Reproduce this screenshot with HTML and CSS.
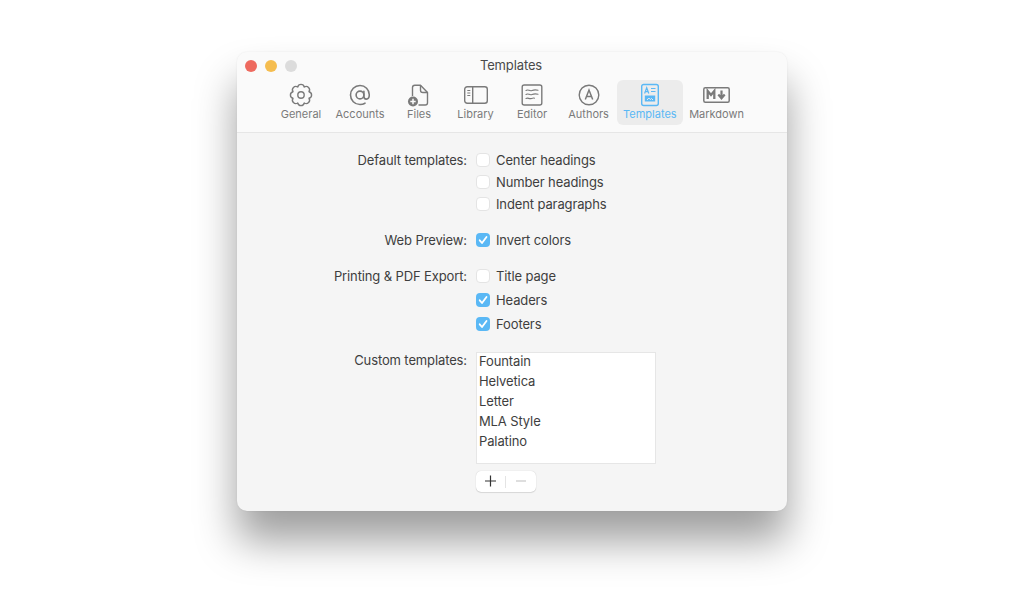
FILE: index.html
```html
<!DOCTYPE html>
<html lang="en">
<head>
    <meta charset="UTF-8">
    <meta name="viewport" content="width=device-width, initial-scale=1.0">
    <title>Templates</title>
    <link rel="stylesheet" href="styles.css">
</head>
<body>
    <div class="window">
        <div class="toolbar">
            <div class="titlebar">
                <div class="lights">
                    <span class="light red"></span>
                    <span class="light yellow"></span>
                    <span class="light grey"></span>
                </div>
                <div class="title">Templates</div>
            </div>
            <div class="tabs">
                <div class="tab">
                    <svg class="icon" width="24" height="24" viewBox="0 0 24 24" fill="none" stroke="currentColor" stroke-width="1.4" stroke-linejoin="round">
                        <path d="M20 8.700A3.400 3.400 0 0 1 20 15.300A3.400 3.400 0 0 1 15.300 20A3.400 3.400 0 0 1 8.700 20A3.400 3.400 0 0 1 4 15.300A3.400 3.400 0 0 1 4 8.700A3.400 3.400 0 0 1 8.700 4A3.400 3.400 0 0 1 15.300 4A3.400 3.400 0 0 1 20 8.700Z"/>
                        <circle cx="12" cy="12" r="3.2"/>
                    </svg>
                    <span>General</span>
                </div>
                <div class="tab">
                    <svg class="icon" width="24" height="24" viewBox="0 0 24 24" fill="none" stroke="currentColor" stroke-width="1.6" stroke-linecap="round">
                        <circle cx="12" cy="12" r="3.9"/>
                        <path d="M15.900 8.200v5.300c0 1.600 1 2.600 2.400 2.600 2 0 3-1.900 3-4.300C21.300 6.600 17.200 2.500 12 2.500 6.700 2.500 2.500 6.700 2.500 12s4.200 9.500 9.500 9.500c1.900 0 3.500-.4 5-1.300"/>
                    </svg>
                    <span>Accounts</span>
                </div>
                <div class="tab">
                    <svg class="icon" width="24" height="24" viewBox="0 0 24 24" fill="none" stroke="currentColor" stroke-width="1.4" stroke-linejoin="round">
                        <path d="M5.500 13V4.500c0-1.500.8-2.300 2.300-2.300h5.700l7 7.300v10.200c0 1.500-.8 2.300-2.300 2.300h-6.700"/>
                        <path d="M13.500 2.200v5c0 1.500.8 2.300 2.300 2.300h4.700"/>
                        <circle cx="6" cy="18.500" r="5" fill="currentColor" stroke="none"/>
                        <path d="M6 15.800v5.400M3.300 18.500h5.400" stroke="#fafafa" stroke-width="1.500"/>
                    </svg>
                    <span>Files</span>
                </div>
                <div class="tab">
                    <svg class="icon" width="24" height="24" viewBox="0 0 24 24" fill="none" stroke="currentColor" stroke-width="1.4">
                        <rect x=".7" y="3.700" width="22.600" height="16.600" rx="2.500"/>
                        <path d="M8.700 3.700v16.600"/>
                        <path d="M3.300 7.500h3M3.300 10h3M3.300 12.500h3" stroke-width="1.200"/>
                    </svg>
                    <span>Library</span>
                </div>
                <div class="tab">
                    <svg class="icon" width="24" height="24" viewBox="0 0 24 24" fill="none" stroke="currentColor" stroke-width="1.4" stroke-linecap="round">
                        <rect x="2.200" y="2" width="19.600" height="20" rx="2"/>
                        <path d="M6 7.500c2-1.500 3.500 1 6 0s3.500-1 6-.2M6 11.500c2-1.500 3.500 1 6 0s3.500-1 6-.2M6 15.500c2-1.200 3 .8 5.500 0s2-.5 3-.3" stroke-width="1.100"/>
                    </svg>
                    <span>Editor</span>
                </div>
                <div class="tab">
                    <svg class="icon" width="24" height="24" viewBox="0 0 24 24" fill="none" stroke="currentColor" stroke-width="1.4">
                        <circle cx="12" cy="12" r="9.800"/>
                        <path d="M8.300 16.500 12 7l3.700 9.500M9.300 13.500h5.400" stroke-width="1.500"/>
                    </svg>
                    <span>Authors</span>
                </div>
                <div class="tab active">
                    <svg class="icon" width="24" height="24" viewBox="0 0 24 24" fill="none" stroke="currentColor" stroke-width="1.4">
                        <rect x="3.700" y="1.500" width="16.600" height="21" rx="2"/>
                        <path d="M6.600 10.500 8.700 4.800l2.100 5.700M7.400 8.700h2.600M13 5.500h4.500M13 8.500h4.500" stroke-width="1.200"/>
                        <path d="M6.800 12.500h10.400v6H6.800z" fill="currentColor" stroke="none"/>
                        <path d="m9 17 1.800-2 1.500 1.500 1.200-1 1.500 1.500" stroke="#ececec" stroke-width="1"/>
                    </svg>
                    <span>Templates</span>
                </div>
                <div class="tab">
                    <svg class="icon" width="27" height="24" viewBox="0 0 27 24" fill="none" stroke="currentColor" stroke-width="1.5">
                        <rect x=".8" y="4.800" width="25.400" height="14.400" rx="1.500"/>
                        <path d="M4.700 16v-8l3.300 4 3.300-4v8" stroke-width="2.300"/>
                        <path d="M18.500 7.500v7M15.300 11.500l3.200 3.700 3.200-3.700" stroke-width="2.200"/>
                    </svg>
                    <span>Markdown</span>
                </div>
            </div>
        </div>

        <form class="prefs">
            <div class="row row-default">
                <div class="row-label">Default templates:</div>
                <div class="row-body">
                    <label class="check"><span class="box"></span>Center headings</label>
                    <label class="check"><span class="box"></span>Number headings</label>
                    <label class="check"><span class="box"></span>Indent paragraphs</label>
                </div>
            </div>
            <div class="row row-preview">
                <div class="row-label">Web Preview:</div>
                <div class="row-body">
                    <label class="check"><span class="box on"><svg width="14" height="14" viewBox="0 0 14 14" fill="none" stroke="#fff" stroke-width="1.800" stroke-linecap="round" stroke-linejoin="round"><path d="M3.700 7.300 6 10l4.500-6"/></svg></span>Invert colors</label>
                </div>
            </div>
            <div class="row row-print">
                <div class="row-label">Printing &amp; PDF Export:</div>
                <div class="row-body">
                    <label class="check"><span class="box"></span>Title page</label>
                    <label class="check"><span class="box on"><svg width="14" height="14" viewBox="0 0 14 14" fill="none" stroke="#fff" stroke-width="1.800" stroke-linecap="round" stroke-linejoin="round"><path d="M3.700 7.300 6 10l4.500-6"/></svg></span>Headers</label>
                    <label class="check"><span class="box on"><svg width="14" height="14" viewBox="0 0 14 14" fill="none" stroke="#fff" stroke-width="1.800" stroke-linecap="round" stroke-linejoin="round"><path d="M3.700 7.300 6 10l4.500-6"/></svg></span>Footers</label>
                </div>
            </div>
            <div class="row row-custom">
                <div class="row-label">Custom templates:</div>
                <div class="row-body">
                    <ul class="list">
                        <li>Fountain</li>
                        <li>Helvetica</li>
                        <li>Letter</li>
                        <li>MLA Style</li>
                        <li>Palatino</li>
                    </ul>
                    <div class="stepper">
                        <svg class="step" width="29" height="21" viewBox="0 0 29 21" stroke="#333" stroke-width="1.2"><path d="M9 10h11M14.500 4.500v11"/></svg>
                        <span class="divider"></span>
                        <svg class="step" width="29" height="21" viewBox="0 0 29 21" stroke="#c8c8c8" stroke-width="1.2"><path d="M10 10h10"/></svg>
                    </div>
                </div>
            </div>
        </form>
    </div>
</body>
</html>
```

FILE: styles.css
```css
html, body {
    height: 100%;
}

body {
    font-family: Inter, "Liberation Sans", sans-serif;
    font-size: 13px;
    letter-spacing: -0.12px;
    margin: 0;
    padding-top: 52px;
    box-sizing: border-box;
    background-color: #fff;
    color: #3e3e3e;
    overflow: hidden;
}

.window {
    width: 550px;
    height: 459px;
    margin-left: 237px;
    border-radius: 10px;
    background: #f5f5f5;
    box-shadow: 0 30px 42px rgba(0, 0, 0, 0.38), 0 0 2px rgba(0, 0, 0, 0.08);
    overflow: hidden;
}

.toolbar {
    height: 81px;
    box-sizing: border-box;
    background: #fafafa;
    border-bottom: 1px solid #e6e6e6;
}

.titlebar {
    display: flex;
    align-items: center;
    height: 28px;
    padding-left: 8px;
}

.lights {
    display: flex;
    gap: 8px;
    width: 0;
}

.light {
    flex: none;
    width: 12px;
    height: 12px;
    border-radius: 50%;
}

.red { background: #ee6a5f; }
.yellow { background: #f5bd4f; }
.grey { background: #dcdcdc; }

.title {
    flex: 1;
    text-align: center;
    color: #4a4a4a;
    padding-right: 10px;
    padding-bottom: 2px;
}

.tabs {
    display: flex;
    justify-content: center;
    gap: 0.5px;
    padding-right: 1px;
}

.tab {
    display: flex;
    flex-direction: column;
    align-items: center;
    min-width: 44px;
    height: 45px;
    padding: 0 6px;
    border-radius: 6px;
    font-size: 11px;
    letter-spacing: 0;
    color: #7a7a7a;
}

.tab .icon {
    margin-top: 3px;
}

.tab.active {
    background: #ececec;
    color: #5ab8f5;
}

.prefs {
    padding-top: 16px;
}

.row {
    display: flex;
    gap: 9px;
}

.row-label {
    width: 230px;
    text-align: right;
    line-height: 22px;
}

.row-preview {
    margin-top: 14px;
}

.row-print {
    margin-top: 14px;
}

.row-custom {
    margin-top: 17px;
}

.row-custom .row-label {
    line-height: 16px;
}

.check {
    display: flex;
    align-items: center;
    gap: 6px;
    height: 22px;
}

.row-print .check + .check {
    margin-top: 2px;
}

.box {
    flex: none;
    width: 14px;
    height: 14px;
    box-sizing: border-box;
    border-radius: 4px;
    background: #fff;
    border: 1px solid #e4e4e4;
}

.box svg {
    display: block;
}

.box.on {
    background: #5ab8f5;
    border: none;
}

.list {
    list-style: none;
    margin: 0 0 7px;
    padding: 0;
    width: 180px;
    height: 112px;
    box-sizing: border-box;
    background: #fff;
    border: 1px solid #e6e6e6;
}

.list li {
    height: 20px;
    line-height: 17px;
    padding-left: 2px;
}

.stepper {
    display: flex;
    align-items: center;
    width: 60px;
    height: 21px;
    border-radius: 5px;
    background: #fff;
    box-shadow: 0 0 1px rgba(0, 0, 0, 0.22), 0 1px 1px rgba(0, 0, 0, 0.1);
}

.step {
    display: block;
}

.divider {
    width: 1px;
    height: 12px;
    background: #e4e4e4;
}
```
